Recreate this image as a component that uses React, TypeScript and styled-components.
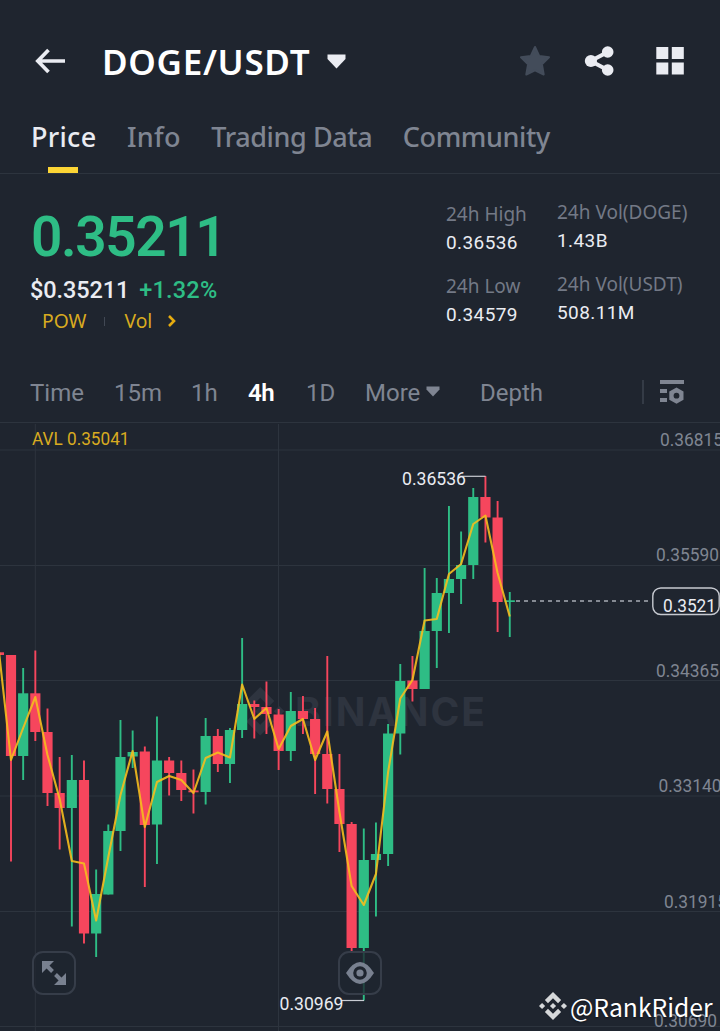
import React from "react";
import styled, { createGlobalStyle } from "styled-components";

const c = {
  bg: "#1f252f",
  line: "#2d343e",
  text: "#eaecf2",
  muted: "#7f8592",
  green: "#2ebd85",
  red: "#f6465d",
  yellow: "#d9ab20",
};

const GlobalStyle = createGlobalStyle`
  * { box-sizing: border-box; }
  body {
    margin: 0;
    background: ${c.bg};
    color: ${c.text};
    font-family: Roboto, "Liberation Sans", sans-serif;
    overflow: hidden;
  }
  svg { display: block; }
`;

const Screen = styled.main`
  display: flex;
  flex-direction: column;
  width: 720px;
  height: 1031px;
  overflow: hidden;
  background: ${c.bg};
`;

const Header = styled.header`
  display: flex;
  align-items: center;
  height: 122px;
  padding: 0 36px 0 35px;
`;

const Title = styled.h1`
  width: 208px;
  margin: 0 17px 0 36px;
  padding-top: 2px;
  font: 600 35px/42px "Noto Sans", sans-serif;
  letter-spacing: 0.7px;
  color: #fff;
  white-space: nowrap;
`;

const Actions = styled.div`
  display: flex;
  align-items: center;
  gap: 33px;
  margin-left: auto;
`;

const Tabs = styled.nav`
  display: flex;
  gap: 30.5px;
  height: 52px;
  padding-left: 31px;
  border-bottom: 1px solid ${c.line};
`;

const Tab = styled.div<{ $active?: boolean; $spacing: number }>`
  display: flex;
  flex-direction: column;
  align-items: center;
  justify-content: space-between;
  font: 500 27px/30px "Noto Sans", sans-serif;
  letter-spacing: ${(p) => p.$spacing}px;
  white-space: nowrap;
  color: ${(p) => (p.$active ? c.text : c.muted)};
  &::after {
    content: "";
    width: 30px;
    height: 6px;
    margin-right: 2px;
    background: ${(p) => (p.$active ? "#fcd535" : "transparent")};
  }
`;

const Summary = styled.section`
  display: flex;
  height: 190px;
  padding-left: 31px;
`;

const PriceColumn = styled.div`
  display: flex;
  flex-direction: column;
  width: 415px;
  padding-top: 33px;
`;

const LastPrice = styled.div`
  font-size: 55px;
  font-weight: 600;
  line-height: 60px;
  letter-spacing: -1.4px;
  color: ${c.green};
`;

const FiatRow = styled.div`
  display: flex;
  gap: 10px;
  margin: 8px 0 0 -1px;
  font-size: 23.5px;
  font-weight: 500;
  line-height: 30px;
  letter-spacing: -0.1px;
`;

const Change = styled.span`
  color: ${c.green};
  letter-spacing: 0.2px;
`;

const TagRow = styled.div`
  display: flex;
  align-items: center;
  margin-top: 1px;
  padding-left: 11px;
  font: 400 19.3px/30px "Noto Sans", sans-serif;
  color: ${c.yellow};
`;

const TagDivider = styled.span`
  width: 1px;
  height: 9px;
  margin: 0 19px 0 18px;
  background: #414854;
`;

const StatColumn = styled.dl<{ $top: number }>`
  width: 111px;
  margin: 0;
  padding-top: ${(p) => p.$top}px;
  white-space: nowrap;
`;

const StatLabel = styled.dt`
  font: 400 19px/28px "Noto Sans", sans-serif;
  color: #737986;
`;

const StatValue = styled.dd`
  margin: 0 0 16px;
  font-size: 19px;
  font-weight: 400;
  line-height: 29px;
  height: 28px;
  letter-spacing: 0.4px;
`;

const Intervals = styled.nav`
  display: flex;
  align-items: center;
  height: 58px;
  padding: 0 36px 0 30px;
`;

const Interval = styled.span<{ $active?: boolean; $width: number }>`
  display: flex;
  align-items: center;
  gap: 6px;
  width: ${(p) => p.$width}px;
  font-size: 24px;
  font-weight: ${(p) => (p.$active ? 600 : 400)};
  letter-spacing: ${(p) => (p.$active ? -0.5 : 0)}px;
  color: ${(p) => (p.$active ? "#fff" : c.muted)};
  white-space: nowrap;
`;

const SettingsSlot = styled.div`
  display: flex;
  align-items: center;
  gap: 16px;
  margin: 0 0 2px auto;
  &::before {
    content: "";
    width: 2px;
    height: 24px;
    background: #343b46;
  }
`;

const ChartArea = styled.section`
  position: relative;
  height: 609px;
`;

const ChartButton = styled.button<{ $left: number }>`
  position: absolute;
  top: 529px;
  left: ${(p) => p.$left}px;
  display: grid;
  place-items: center;
  width: 44px;
  height: 44px;
  padding: 0;
  border: 2px solid #363d49;
  border-radius: 11px;
  background: rgba(31, 37, 47, 0.78);
`;

const Author = styled.div`
  position: absolute;
  left: 539px;
  top: 566px;
  display: flex;
  align-items: center;
  gap: 3px;
  font: 400 24.7px/36px "Noto Sans CJK SC", sans-serif;
  color: #fff;
  white-space: nowrap;
  text-shadow: 0 1px 2px rgba(0, 0, 0, 0.5);
`;

type Candle = [dir: "u" | "d", top: number, bottom: number, high: number, low: number];

const candles: Candle[] = [
  ["d", 655, 756, 655, 861.5], ["u", 693.3, 756, 668, 780], ["d", 693.3, 732, 650.5, 741],
  ["d", 732, 793, 708.5, 806], ["d", 793, 808, 757, 849.5], ["u", 780, 808, 755, 926.5],
  ["d", 780, 933.5, 760.5, 943.5], ["u", 894, 933.5, 869.5, 957], ["u", 831, 894.5, 824.5, 894.5],
  ["u", 757, 831, 720, 851], ["u", 752, 756.5, 730.5, 768], ["d", 751.5, 825, 746.5, 887],
  ["u", 760.5, 824.5, 716.5, 864], ["d", 760.5, 773, 757, 795.5], ["d", 773, 790, 760.5, 801],
  ["d", 790.5, 792.3, 769.5, 813.5], ["u", 736, 792, 718, 804.5], ["d", 736, 764, 729, 772],
  ["u", 730, 764, 728, 783], ["u", 704, 730, 638, 738], ["d", 704, 707, 700.5, 738.5],
  ["d", 707, 714, 681.5, 734], ["d", 714.5, 751, 709, 770], ["u", 711, 751, 692, 761],
  ["d", 711, 719, 696, 734], ["d", 719, 754, 708, 794], ["d", 754, 789, 656, 803.5],
  ["d", 789, 824, 754, 852], ["d", 824, 948, 822, 951], ["u", 860, 948, 828.5, 1000.5],
  ["u", 854, 860, 822.5, 916.5], ["u", 733.5, 854, 724, 866], ["u", 681, 733.5, 664, 754.5],
  ["d", 680.5, 689, 656, 701.5], ["u", 631, 689, 568, 689], ["u", 593, 631, 578, 668],
  ["u", 579, 593, 506, 633], ["u", 565, 579, 531.5, 604], ["u", 497, 565, 488, 579],
  ["d", 497, 517.5, 476, 542.5], ["d", 517.5, 602, 501, 632], ["u", 600.3, 602, 592, 637],
];

const average = [
  760, 728, 697, 755, 799, 861, 863.5, 920.5, 857, 795, 751, 827, 782, 776, 780, 793, 758, 752.5,
  757.5, 684.5, 719, 708, 749, 726, 719, 760, 731.5, 812, 886, 905, 874, 772, 698.5, 680, 620.5,
  619, 574, 564, 524, 515.5, 573, 616.5,
];

const xAt = (i: number) => 11 + i * 12.165;

const scale: [string, number, number][] = [
  ["0.36815", 660, 446], ["0.35590", 656, 561], ["0.34365", 656, 677],
  ["0.33140", 658.5, 792], ["0.31915", 664, 908], ["0.30690", 654, 1027],
];

const Num = ({ x, y, children, w = 63, size = 18, fill = c.muted, weight = 400 }: {
  x: number; y: number; children: string; w?: number; size?: number; fill?: string; weight?: number;
}) => (
  <text x={x} y={y} textLength={w} lengthAdjust="spacingAndGlyphs" fontSize={size} fill={fill} fontWeight={weight}>
    {children}
  </text>
);

const BrandShape = () => (
  <>
    <path d="M50 0 79 29 68 40 50 22 32 40 21 29Z" />
    <path d="M50 100 79 71 68 60 50 78 32 60 21 71Z" />
    <path d="M50 39 61 50 50 61 39 50Z" />
    <path d="M11 39 22 50 11 61 0 50Z" />
    <path d="M89 39 100 50 89 61 78 50Z" />
  </>
);

const Chart = () => (
  <svg width="720" height="609" viewBox="0 422 720 609">
    <g stroke={c.line} strokeWidth="1">
      {[422.5, 450, 565.5, 680.5, 796, 911.5, 1026.5].map((y) => (
        <line key={y} x1="0" x2="720" y1={y} y2={y} />
      ))}
      <line x1="35.3" x2="35.3" y1="424" y2="1031" />
      <line x1="278.5" x2="278.5" y1="424" y2="1031" />
    </g>
    <g fill="#2e343f">
      <g transform="translate(236 687) scale(.485)"><BrandShape /></g>
      <text x="295" y="726" fontFamily="Inter, sans-serif" fontWeight="700" fontSize="39" textLength="190">BINANCE</text>
    </g>
    <rect x="-6" y="652.3" width="10" height="2.7" fill={c.red} />
    {candles.map(([dir, top, bottom, high, low], i) => (
      <g key={i} fill={dir === "u" ? c.green : c.red}>
        <rect x={xAt(i) - 0.95} y={high} width="1.9" height={low - high} />
        <rect x={xAt(i) - 5.1} y={top} width="10.2" height={bottom - top} />
      </g>
    ))}
    <polyline
      points={`-1.2,650 ${average.map((y, i) => `${xAt(i)},${y}`).join(" ")}`}
      fill="none" stroke="#f5bd1e" strokeOpacity=".9" strokeWidth="2.1" strokeLinejoin="round"
    />
    <line x1="516" x2="652" y1="601" y2="601" stroke="#a8acb5" strokeWidth="1.4" strokeDasharray="4 4" />
    <path d="M460 476.3H485.5" stroke="#c9ccd3" strokeWidth="1.2" />
    <path d="M341 1000.5H364" stroke="#c9ccd3" strokeWidth="1.2" />
    <Num x={32} y={445} w={97.5} fill={c.yellow}>AVL 0.35041</Num>
    <Num x={402} y={485} w={64} fill={c.text}>0.36536</Num>
    <Num x={279.5} y={1010} w={64} fill={c.text}>0.30969</Num>
    {scale.map(([label, x, y]) => <Num key={label} x={x} y={y}>{label}</Num>)}
    <rect x="652.8" y="588" width="66.4" height="26.5" rx="8" fill={c.bg} stroke="#c6c9d0" strokeWidth="1.4" />
    <Num x={663} y={612} w={53} fill={c.text}>0.3521</Num>
  </svg>
);

export default function App() {
  return (
    <Screen>
      <GlobalStyle />
      <Header>
        <svg width="31" height="26" viewBox="0 0 31 26" fill="none" stroke={c.text} strokeWidth="3.7">
          <path d="M30 13H3M13.5 2 2.8 13l10.7 11" />
        </svg>
        <Title>DOGE/USDT</Title>
        <svg width="19" height="15" viewBox="0 0 19 15" fill={c.text}><path d="M.5 .5h18v4.5L9.5 14.5.5 5Z" /></svg>
        <Actions>
          <svg width="32" height="32" viewBox="0 0 32 32" fill="#434c5a" stroke="#434c5a" strokeWidth="2" strokeLinejoin="round">
            <path d="m16 2 4.3 9.1 9.7 1.2-7.1 6.9 1.8 10.3L16 25.4 7.3 29.5 9.1 19.2 2 12.3l9.7-1.2Z" />
          </svg>
          <svg width="30" height="32" viewBox="-.7 0 30 32" fill={c.text} stroke={c.text}>
            <path d="m6 16 17-9M6 16l17 9" strokeWidth="4.2" />
            <g stroke="none"><circle cx="6.2" cy="16" r="6.1" /><circle cx="23" cy="7" r="5.8" /><circle cx="23" cy="25" r="5.8" /></g>
          </svg>
          <svg width="37" height="28" viewBox="-9.300 0 37 28" fill={c.text}>
            <path d="M0 0h12v12H0zM15.5 0h12v12h-12zM0 15.5h12v12H0zM15.5 15.5h12v12h-12z" />
          </svg>
        </Actions>
      </Header>
      <Tabs>
        <Tab $active $spacing={0.3}>Price</Tab>
        <Tab $spacing={0.3}>Info</Tab>
        <Tab $spacing={-0.4}>Trading Data</Tab>
        <Tab $spacing={-0.4}>Community</Tab>
      </Tabs>
      <Summary>
        <PriceColumn>
          <LastPrice>0.35211</LastPrice>
          <FiatRow><span>$0.35211</span><Change>+1.32%</Change></FiatRow>
          <TagRow>
            <span>POW</span><TagDivider /><span>Vol</span>
            <svg width="8" height="12" viewBox="0 0 8 12" fill="none" stroke="#e6ac10" strokeWidth="2.6" style={{ marginLeft: 16 }}>
              <path d="m1 1 5 5-5 5" />
            </svg>
          </TagRow>
        </PriceColumn>
        <StatColumn $top={26}>
          <StatLabel>24h High</StatLabel><StatValue>0.36536</StatValue>
          <StatLabel>24h Low</StatLabel><StatValue>0.34579</StatValue>
        </StatColumn>
        <StatColumn $top={24}>
          <StatLabel>24h Vol(DOGE)</StatLabel><StatValue>1.43B</StatValue>
          <StatLabel>24h Vol(USDT)</StatLabel><StatValue>508.11M</StatValue>
        </StatColumn>
      </Summary>
      <Intervals>
        <Interval $width={84}>Time</Interval>
        <Interval $width={77}>15m</Interval>
        <Interval $width={57}>1h</Interval>
        <Interval $width={58} $active>4h</Interval>
        <Interval $width={59}>1D</Interval>
        <Interval $width={115}>
          More
          <svg width="14" height="15" viewBox="0 0 14 15" fill={c.muted}><path d="M.5 .5h13V3.500L7 10.500.5 3.500Z" /></svg>
        </Interval>
        <Interval $width={64}>Depth</Interval>
        <SettingsSlot>
          <svg width="24" height="24" viewBox="0 0 24 24" fill={c.muted}>
            <path d="M0 0h24v4H0zM0 9h7v4H0zM0 18h7v4H0z" />
            <path fillRule="evenodd" d="M16.500 7.500 23.500 11.500v8.200L16.500 23.800 9.300 19.700v-8.200ZM16.500 12.800a2.900 2.900 0 1 0 0 5.800 2.900 2.900 0 0 0 0-5.800Z" />
          </svg>
        </SettingsSlot>
      </Intervals>
      <ChartArea>
        <Chart />
        <ChartButton $left={32} aria-label="Expand">
          <svg width="24" height="24" viewBox="0 0 24 24" fill="#798190" stroke="#798190">
            <path stroke="none" d="M0 0h12L0 12ZM24 24H12L24 12Z" />
            <path d="m4 4 6.500 6.500M20 20l-6.500-6.500" strokeWidth="4" />
          </svg>
        </ChartButton>
        <ChartButton $left={338} aria-label="Show">
          <svg width="28" height="22" viewBox="0 0 28 22">
            <path d="M0 11Q7 0 14 0t14 11Q21 22 14 22T0 11Z" fill="#798190" />
            <circle cx="14" cy="11" r="5.200" fill="#798190" stroke={c.bg} strokeWidth="3.200" />
          </svg>
        </ChartButton>
        <Author>
          <svg width="28" height="28" viewBox="0 0 100 100" fill="#d6d8da"><BrandShape /></svg>
          <span>@RankRider</span>
        </Author>
      </ChartArea>
    </Screen>
  );
}
